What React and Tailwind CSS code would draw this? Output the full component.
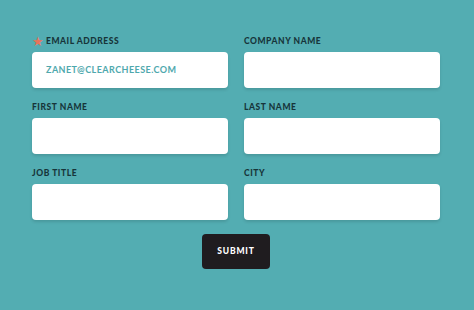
import React from 'react';

const fields = [
    { label: 'Email Address', value: 'zanet@clearcheese.com', required: true },
    { label: 'Company Name' },
    { label: 'First Name' },
    { label: 'Last Name' },
    { label: 'Job Title' },
    { label: 'City' },
];

function Field({ label, value, required }) {
    return (
        <div className="flex flex-col">
            <div className="flex items-center h-[12px] mb-[5px]">
                {required && <span className="text-[#e8735a] text-[13px] leading-none w-[14px]">★</span>}
                <span className="text-[8.5px] font-black uppercase tracking-[0.065em] text-[#17353a] leading-none">{label}</span>
            </div>
            <div className="h-[36px] bg-white rounded-[4px] shadow-[0_2px_3px_rgba(0,0,0,0.12)] flex items-center px-[14px]">
                {value && <span className="text-[9px] font-bold uppercase tracking-[0.05em] text-[#4ea8ad]">{value}</span>}
            </div>
        </div>
    );
}

export default function App() {
    return (
        <div className="w-[474px] h-[310px] bg-[#53adb2] pt-[35px] pl-[32px]" style={{ fontFamily: 'Lato, "Liberation Sans", sans-serif' }}>
            <div className="grid grid-cols-[196px_196px] gap-x-[16px] gap-y-[13px]">
                {fields.map((f, idx) => <Field key={idx} {...f} />)}
            </div>
            <div className="w-[408px] flex justify-center mt-[14px]">
                <button className="w-[68px] h-[35px] bg-[#1f1c1f] rounded-[4px] text-white text-[8.5px] font-black tracking-[0.1em] uppercase">
                    Submit
                </button>
            </div>
        </div>
    );
}
